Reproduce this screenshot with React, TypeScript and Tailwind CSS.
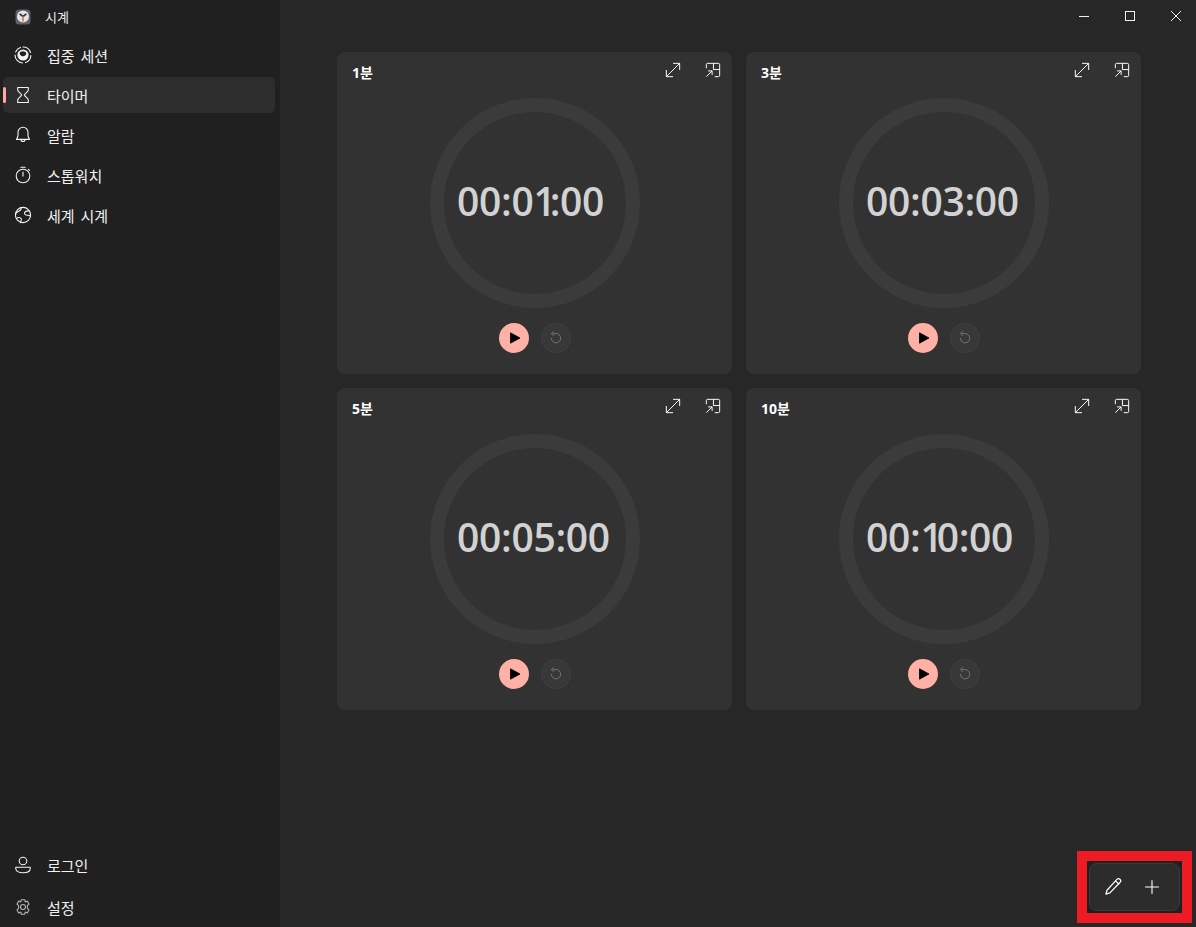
import type { ReactNode } from 'react';

const FONT = "font-['Noto_Sans','Noto_Sans_CJK_KR',sans-serif]";

function Icon({ children, size = 18, className = '' }: { children: ReactNode; size?: number; className?: string }) {
  return (
    <svg width={size} height={size} viewBox="0 0 18 18" fill="none" stroke="currentColor" strokeWidth="1.1" strokeLinecap="round" strokeLinejoin="round" className={className}>
      {children}
    </svg>
  );
}

function ClockLogo() {
  return (
    <svg width="16" height="16" viewBox="0 0 16 16">
      <rect x="0.5" y="0.5" width="15" height="15" rx="3.5" fill="#5d6268" />
      <circle cx="8" cy="7.4" r="6" fill="#e4e4e4" />
      <path d="M8 7.5 4.6 4.8M8 7.5l3.4-2.7" stroke="#33363a" strokeWidth="1.6" />
      <path d="M8 7.5v5" stroke="#e8795c" strokeWidth="1.8" />
    </svg>
  );
}

const FocusIcon = (
  <>
    <path d="M9 1a8 8 0 0 1 7.600 5.500M16.900 9.500a8 8 0 0 1-5.400 7.100M8.500 17A8 8 0 0 1 1 9M1.600 6A8 8 0 0 1 6.500 1.400" />
    <circle cx="9" cy="9" r="5.600" fill="currentColor" stroke="none" />
    <path d="M6.500 5.800c2-1.300 5-.6 5.700 1.200.5 1.500-.9 3-2.700 3.300-1.500.3-2.700-.6-3.400-1.500-.6-1-.4-2.300.4-3Z" fill="#202020" stroke="none" />
  </>
);

const HourglassIcon = (
  <path d="M3.700 1.500h10.600v2.600c0 1.700-3.400 3.400-3.900 4.900.5 1.500 3.900 3.200 3.900 4.900v2.600H3.700v-2.600c0-1.700 3.400-3.400 3.900-4.900-.5-1.500-3.900-3.200-3.900-4.900Z" />
);

const BellIcon = (
  <>
    <path d="M9 1.300c-3 0-5 2.300-5 5v3.800L2.500 13.400h13L14 10.100V6.300c0-2.700-2-5-5-5Z" />
    <path d="M7 13.500c0 2.700 4 2.700 4 0" />
  </>
);

const TimerIcon = (
  <>
    <circle cx="9" cy="10" r="6.800" />
    <path d="M9 10V6M6.800 1.200h4.400M14.400 3.400l1 1" />
  </>
);

const GlobeIcon = (
  <>
    <circle cx="9" cy="9" r="7.600" />
    <path d="M6.800 1.800C8 3.600 5.800 4.500 4.600 5.300 3.100 6.300 2 6.500 1.500 8.500M15.500 5c-2.200-.3-4.300.2-5 1.800-.6 1.500 1.400 2.600 3 2.400 1.200-.1 2.400.1 3 1M2.500 12.700c1.700-1.700 3.700-1.300 4.700 0 .7 1-.5 1.800-.6 3.900" />
  </>
);

const UserIcon = (
  <>
    <circle cx="9" cy="5" r="3.800" />
    <path d="M1.800 11.200h14.400v1.200c0 2.700-3.200 4.300-7.200 4.300s-7.200-1.600-7.200-4.300Z" />
  </>
);

const GearIcon = (
  <>
    <circle cx="9" cy="9" r="2.500" />
    <path d="M7.300 1.700h3.400l.5 2.200 2.100-.8 1.700 2.900-1.600 1.600v2.800l1.600 1.500-1.700 3-2.100-.8-.5 2.200H7.300l-.5-2.200-2.100.8-1.700-3 1.600-1.500V7.600L3 6l1.700-2.900 2.100.8Z" />
  </>
);

function NavRow({ icon, label, active = false, muted = false }: { icon: ReactNode; label: string; active?: boolean; muted?: boolean }) {
  return (
    <div className={`relative ml-[3px] flex h-9 w-[272px] items-center rounded-[5px] pl-[11px] ${active ? 'bg-[#2d2d2d]' : ''}`}>
      {active && <div className="absolute left-0 top-[10px] h-[16px] w-[3px] rounded-full bg-[#ffaa9c]" />}
      <Icon className={muted ? 'text-[#b4b4b4]' : 'text-[#f2f2f2]'}>{icon}</Icon>
      <span className="ml-[15px] mt-[1px] text-[15px] leading-5 text-[#f0f0f0] [word-spacing:2px]">{label}</span>
    </div>
  );
}

function Sidebar() {
  return (
    <aside className="flex h-full w-[280px] shrink-0 flex-col bg-[#202020]">
      <div className="flex h-[37px] items-start pl-[15px] pt-[9px]">
        <ClockLogo />
        <span className="ml-[14px] text-[13px] leading-4 text-[#ececec]">시계</span>
      </div>
      <nav className="flex flex-col gap-1">
        <NavRow icon={FocusIcon} label="집중 세션" />
        <NavRow icon={HourglassIcon} label="타이머" active />
        <NavRow icon={BellIcon} label="알람" />
        <NavRow icon={TimerIcon} label="스톱워치" />
        <NavRow icon={GlobeIcon} label="세계 시계" />
      </nav>
      <div className="mt-auto flex flex-col gap-[6px] pb-[2px]">
        <NavRow icon={UserIcon} label="로그인" />
        <NavRow icon={GearIcon} label="설정" muted />
      </div>
    </aside>
  );
}

function TimerCard({ title, time }: { title: string; time: string }) {
  return (
    <div className="flex h-[322px] w-[395px] flex-col rounded-[8px] bg-[#323232]">
      <div className="flex h-[46px] items-start pl-[15px] pr-[11px] pt-[10px]">
        <span className="mt-[1px] text-[14px] font-bold leading-5 text-white">{title}</span>
        <div className="ml-auto flex gap-[24px] text-white">
          <Icon size={16}>
            <path d="M1.500 9v7.500H9M16.500 9V1.500H9M1.500 16.500l15-15" strokeLinecap="butt" strokeLinejoin="miter" />
          </Icon>
          <Icon size={16}>
            <path d="M1.500 7V3A1.500 1.500 0 0 1 3 1.500h12A1.500 1.500 0 0 1 16.500 3v12a1.500 1.500 0 0 1-1.500 1.500h-4M9.500 1.500v7h7M1.500 16.500 8 10M3.500 10H8v4.500" strokeLinecap="butt" />
          </Icon>
        </div>
      </div>
      <div className="ml-[93px] flex h-[210px] w-[210px] items-center rounded-full border-[14px] border-[#3b3b3b] pb-[6px] pl-[13px]">
        <span className="whitespace-nowrap font-['Open_Sans','Noto_Sans',sans-serif] text-[39px] font-semibold leading-none text-[#d2d2d2]">
          {/* 1 is narrower in the original font */}
          {time.split('').map((ch, i) => (
            <span key={i} className={ch === '1' ? 'tracking-[-6px]' : 'tracking-[-0.3px]'}>{ch}</span>
          ))}
        </span>
      </div>
      <div className="mt-[15px] flex justify-center gap-[12px] pl-[1px]">
        <div className="flex h-[30px] w-[30px] items-center justify-center rounded-full bg-[#ffb1a5]">
          <svg width="12" height="12" viewBox="0 0 12 12" className="ml-[1px]">
            <path d="M1.500 .8v10.400L11 6Z" fill="#000" stroke="#000" strokeWidth="0.800" strokeLinejoin="round" />
          </svg>
        </div>
        <div className="flex h-[30px] w-[30px] items-center justify-center rounded-full border border-[#404040] bg-[#383838] text-[#7c7c7c]">
          <Icon size={14}>
            <path d="M5.500 3.300H9a6 6 0 1 1-6 6.200M6 .8 3 3.300l3 2.700" />
          </Icon>
        </div>
      </div>
    </div>
  );
}

export default function App() {
  return (
    <div className={`flex h-[927px] w-[1196px] overflow-hidden bg-[#272727] ${FONT}`}>
      <Sidebar />
      <main className="flex min-w-0 flex-1 flex-col">
        <div className="-mr-[3px] flex h-[52px] items-start justify-end text-white">
          <div className="flex h-[32px] w-[46px] items-center justify-center">
            <div className="h-px w-[10px] bg-[#f0f0f0]" />
          </div>
          <div className="flex h-[32px] w-[46px] items-center justify-center">
            <div className="h-[10px] w-[10px] border border-[#f0f0f0]" />
          </div>
          <div className="flex h-[32px] w-[46px] items-center justify-center">
            <svg width="10" height="10" viewBox="0 0 10 10" stroke="#f0f0f0" strokeWidth="1">
              <path d="M0 0l10 10M10 0 0 10" />
            </svg>
          </div>
        </div>
        <div className="ml-[57px] grid grid-cols-[395px_395px] gap-[14px]">
          <TimerCard title="1분" time="00:01:00" />
          <TimerCard title="3분" time="00:03:00" />
          <TimerCard title="5분" time="00:05:00" />
          <TimerCard title="10분" time="00:10:00" />
        </div>
        <div className="mt-auto flex justify-end pb-[4px] pr-[4px]">
          <div className="flex h-[72px] w-[115px] border-[10px] border-[#ed1c24] bg-[#202020] p-[2px]">
            <div className="flex flex-1 items-center justify-center gap-[20px] rounded-[8px] border border-[#3a3a3a] bg-[#2c2c2c] pr-[5px] text-white">
              <Icon size={20}>
                <path d="M12.500 2.200a1.900 1.900 0 0 1 2.900 2.500L6.200 14.300 2.600 15.400l1-3.500ZM11.200 3.500l3 2.800" />
              </Icon>
              <Icon size={18}>
                <path d="M9 2.500v13M2.500 9h13" />
              </Icon>
            </div>
          </div>
        </div>
      </main>
    </div>
  );
}
